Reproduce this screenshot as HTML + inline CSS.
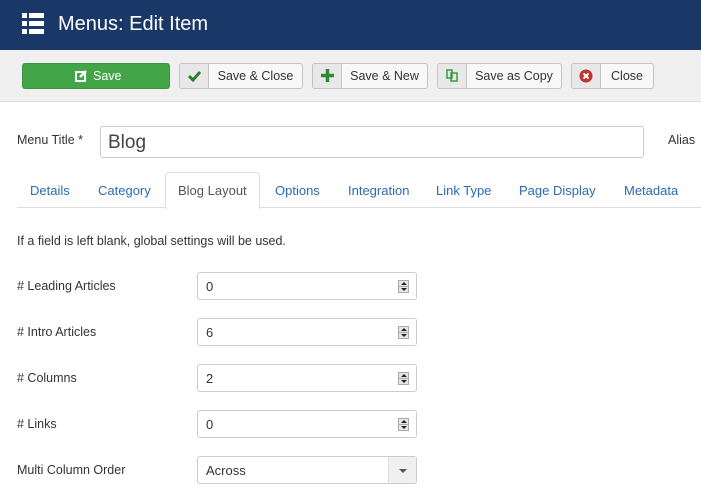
<!DOCTYPE html>
<html><head><style>
*{box-sizing:border-box;margin:0;padding:0}
body{width:701px;height:494px;overflow:hidden;background:#fff;font-family:"Liberation Sans",sans-serif;font-size:13px;color:#333;position:relative}
.a{position:absolute}
.hdr{left:0;top:0;width:701px;height:50px;background:#1a3867}
.tb{left:0;top:50px;width:701px;height:52px;background:#f0f0f0;border-bottom:1px solid #ddd}
.btn{position:absolute;top:63px;height:26px;border:1px solid #c4c4c4;border-radius:3px;background:#f8f8f8;font-size:12.5px;color:#333;line-height:25px;overflow:hidden}
.btn .ic{position:absolute;left:0;top:0;width:29px;height:24px;background:#e8e8e8;border-right:1px solid #c4c4c4}
.btn .t{position:absolute;left:29px;right:0;text-align:center}
.tab{position:absolute;top:183px;color:#2a6bb3;font-size:13px}
.lbl{position:absolute;left:17px;font-size:12.5px}
.inp{position:absolute;left:197px;width:220px;height:28px;border:1px solid #ccc;border-radius:3px;padding-left:8px;line-height:27px;font-size:13px}
.sp{position:absolute;right:7px;top:7px;width:11px;height:13px;border:1px solid #aaa;background:#e6e6e6}
.sp:before{content:"";position:absolute;left:2px;top:1px;border:3px solid transparent;border-bottom:3px solid #222;border-top:0}
.sp:after{content:"";position:absolute;left:2px;top:7px;border:3px solid transparent;border-top:3px solid #222;border-bottom:0}
.sp i{position:absolute;left:0;top:5px;width:9px;height:1px;background:#aaa}
</style></head><body>
<div class="a hdr"></div>
<svg class="a" style="left:22px;top:13px" width="22" height="22"><g fill="#fff"><rect x="0" y="0" width="5" height="5"/><rect x="7" y="0" width="15" height="5"/><rect x="0" y="8" width="5" height="5"/><rect x="7" y="8" width="15" height="5"/><rect x="0" y="16" width="5" height="5"/><rect x="7" y="16" width="15" height="5"/></g></svg>
<div class="a" style="left:58px;top:13px;color:#fff;font-size:20px">Menus: Edit Item</div>
<div class="a tb"></div>
<div class="btn" style="left:22px;width:148px;background:#42a548;border-color:#3a9440;color:#fff;text-align:center">
<svg style="position:absolute;left:52px;top:6px" width="12" height="12"><rect x="1" y="2" width="9" height="9" fill="none" stroke="#fff" stroke-width="2"/><path d="M5 7 L11 1" stroke="#fff" stroke-width="2.5"/></svg>
<span style="position:absolute;left:70px">Save</span></div>
<div class="btn" style="left:179px;width:124px"><div class="ic"><svg style="position:absolute;left:8px;top:6px" width="13" height="12"><path d="M1 6 L5 10 L12 2" fill="none" stroke="#2f7d32" stroke-width="3"/></svg></div><span class="t">Save &amp; Close</span></div>
<div class="btn" style="left:312px;width:116px"><div class="ic"><svg style="position:absolute;left:8px;top:5px" width="13" height="13"><path d="M6.5 0V13M0 6.5H13" stroke="#2f8a33" stroke-width="3.5"/></svg></div><span class="t">Save &amp; New</span></div>
<div class="btn" style="left:437px;width:125px"><div class="ic"><svg style="position:absolute;left:8px;top:5px" width="13" height="13"><path d="M1 1H6V9H1Z M5 4H11V12H5Z" fill="#e8e8e8" stroke="#3c9a3e" stroke-width="1.5"/></svg></div><span class="t">Save as Copy</span></div>
<div class="btn" style="left:571px;width:83px"><div class="ic"><svg style="position:absolute;left:7px;top:5px" width="14" height="14"><circle cx="7" cy="7" r="6.5" fill="#bd362f"/><path d="M4.5 4.5L9.5 9.5M9.5 4.5L4.5 9.5" stroke="#fff" stroke-width="2"/></svg></div><span class="t">Close</span></div>
<div class="a" style="left:17px;top:133px;font-size:12.5px">Menu Title *</div>
<div class="a" style="left:100px;top:126px;width:544px;height:32px;border:1px solid #ccc;border-radius:3px;font-size:19px;padding-left:7px;line-height:31px;color:#444">Blog</div>
<div class="a" style="left:668px;top:133px;font-size:12.5px">Alias</div>
<div class="a" style="left:17px;top:207px;width:684px;height:1px;background:#ddd"></div>
<div class="a" style="left:165px;top:172px;width:95px;height:37px;border:1px solid #ddd;border-bottom:none;border-radius:4px 4px 0 0;background:#fff"></div>
<div class="tab" style="left:30px">Details</div>
<div class="tab" style="left:98px">Category</div>
<div class="tab" style="left:178px;color:#555">Blog Layout</div>
<div class="tab" style="left:275px">Options</div>
<div class="tab" style="left:348px">Integration</div>
<div class="tab" style="left:436px">Link Type</div>
<div class="tab" style="left:519px">Page Display</div>
<div class="tab" style="left:624px">Metadata</div>
<div class="a" style="left:17px;top:234px;font-size:12.5px">If a field is left blank, global settings will be used.</div>
<div class="lbl" style="top:279px"># Leading Articles</div>
<div class="inp" style="top:272px">0<div class="sp"><i></i></div></div>
<div class="lbl" style="top:325px"># Intro Articles</div>
<div class="inp" style="top:318px">6<div class="sp"><i></i></div></div>
<div class="lbl" style="top:371px"># Columns</div>
<div class="inp" style="top:364px">2<div class="sp"><i></i></div></div>
<div class="lbl" style="top:417px"># Links</div>
<div class="inp" style="top:410px">0<div class="sp"><i></i></div></div>
<div class="lbl" style="top:463px">Multi Column Order</div>
<div class="inp" style="top:456px">Across<div style="position:absolute;right:0;top:0;width:28px;height:26px;background:#f0f0f0;border-left:1px solid #ddd"><div style="position:absolute;left:10px;top:12px;border:4px solid transparent;border-top:4px solid #555;border-bottom:0"></div></div></div>
</body></html>
